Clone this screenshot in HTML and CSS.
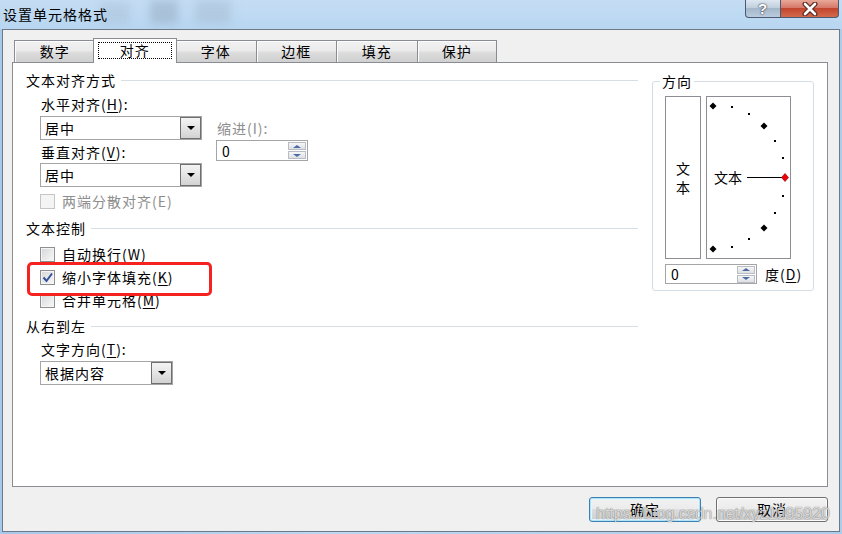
FILE: index.html
```html
<!DOCTYPE html>
<html lang="zh-CN">
<head>
	<meta charset="UTF-8">
	<title>设置单元格格式</title>
	<link rel="stylesheet" href="styles.css">
</head>
<body>
	<div class="titlebar">
		<span class="blob b1"></span>
		<span class="blob b2"></span>
		<span class="blob b3"></span>
		<span class="title">设置单元格格式</span>
		<div class="caption">
			<span class="cap help">?</span>
			<span class="cap close">
				<svg width="18" height="14" viewBox="0 0 18 14">
					<path d="M4 2 L14 12 M14 2 L4 12" stroke="#5a2a22" stroke-width="5" stroke-linecap="round"/>
					<path d="M4 2 L14 12 M14 2 L4 12" stroke="#fff" stroke-width="2.6" stroke-linecap="round"/>
				</svg>
			</span>
		</div>
	</div>

	<div class="dialog">
		<div class="tabs">
			<div class="tab">数字</div>
			<div class="tab active"><span class="focus">对齐</span></div>
			<div class="tab">字体</div>
			<div class="tab">边框</div>
			<div class="tab">填充</div>
			<div class="tab last">保护</div>
		</div>

		<div class="panel">
			<div class="left">
				<div class="head first"><span>文本对齐方式</span><i></i></div>
				<div class="align-row">
					<div class="col">
						<div class="label">水平对齐(<u>H</u>):</div>
						<div class="select wide gap4"><span>居中</span><span class="drop"></span></div>
						<div class="label gap4">垂直对齐(<u>V</u>):</div>
						<div class="select wide gap3"><span>居中</span><span class="drop"></span></div>
					</div>
					<div class="indent">
						<div class="label grey">缩进(I):</div>
						<div class="spin gap4">
							<span>0</span>
							<span class="arrows"><b class="up"></b><b class="down"></b></span>
						</div>
					</div>
				</div>
				<div class="check disabled row-dist"><span class="box"></span><span>两端分散对齐(E)</span></div>

				<div class="head h2"><span>文本控制</span><i></i></div>
				<div class="check row1"><span class="box"></span><span>自动换行(<u>W</u>)</span></div>
				<div class="check row2 marked">
					<span class="box">
						<svg width="13" height="13" viewBox="0 0 13 13">
							<path d="M2.5 6.5 L5.5 10 L11 2.5" fill="none" stroke="#34509a" stroke-width="2"/>
						</svg>
					</span>
					<span>缩小字体填充(<u>K</u>)</span>
				</div>
				<div class="check row3"><span class="box"></span><span>合并单元格(<u>M</u>)</span></div>

				<div class="head h3"><span>从右到左</span><i></i></div>
				<div class="label sub">文字方向(<u>T</u>):</div>
				<div class="select narrow gap4"><span>根据内容</span><span class="drop"></span></div>
			</div>

			<fieldset class="orient">
				<legend>方向</legend>
				<div class="orient-boxes">
					<div class="vtext"><span>文</span><span>本</span></div>
					<div class="arc">
						<svg width="83" height="161" viewBox="0 0 83 161">
							<g fill="#000">
								<polygon points="6,5.5 9.5,9 6,12.5 2.5,9"/>
								<polygon points="57,25.5 60.5,29 57,32.5 53.5,29"/>
								<polygon points="57,127.5 60.5,131 57,134.5 53.5,131"/>
								<polygon points="6,148.5 9.5,152 6,155.5 2.5,152"/>
								<rect x="24" y="9" width="2" height="2"/>
								<rect x="41" y="16" width="2" height="2"/>
								<rect x="67" y="43" width="2" height="2"/>
								<rect x="75" y="60" width="2" height="2"/>
								<rect x="75" y="98" width="2" height="2"/>
								<rect x="67" y="115" width="2" height="2"/>
								<rect x="41" y="141" width="2" height="2"/>
								<rect x="24" y="149" width="2" height="2"/>
								<rect x="40" y="80" width="36" height="1"/>
							</g>
							<polygon points="78,76.5 81.5,80.5 78,84.5 74.5,80.5" fill="#f00000" stroke="#700" stroke-width="0.6"/>
						</svg>
						<span class="arc-text">文本</span>
					</div>
				</div>
				<div class="deg-row">
					<div class="spin deg">
						<span>0</span>
						<span class="arrows"><b class="up"></b><b class="down"></b></span>
					</div>
					<span class="deg-label">度(<u>D</u>)</span>
				</div>
			</fieldset>
		</div>

		<div class="buttons">
			<div class="btn default">确定</div>
			<div class="btn">取消</div>
		</div>
	</div>

	<div class="watermark">https://blog.csdn.net/xyz1995920</div>
</body>
</html>
```

FILE: styles.css
```css
* {
	box-sizing: border-box;
}

body {
	margin: 0;
	width: 842px;
	height: 534px;
	overflow: hidden;
	position: relative;
	background: linear-gradient(90deg, #a6c9ea, #bcd8f1 40%, #aacdec);
	font-family: "Noto Sans CJK SC", sans-serif;
	font-size: 14px;
	letter-spacing: 1px;
	line-height: 16px;
	color: #000;
}

u {
	text-decoration: underline;
	text-underline-offset: 2px;
}

/* title bar */
.titlebar {
	height: 29px;
	position: relative;
	display: flex;
	align-items: flex-start;
	background: linear-gradient(180deg, #c4ddf4, #b8d6f1);
	overflow: hidden;
}

.blob {
	position: absolute;
	filter: blur(4px);
	background: rgba(130, 150, 170, 0.35);
}

.b1 { left: 100px; top: 2px; width: 30px; height: 22px; background: rgba(150, 170, 190, 0.25); }
.b2 { left: 150px; top: 0; width: 28px; height: 24px; }
.b3 { left: 195px; top: 0; width: 36px; height: 24px; background: rgba(150, 170, 190, 0.3); }

.title {
	position: relative;
	padding: 6px 0 0 3px;
	font-size: 14px;
}

.caption {
	margin-left: auto;
	margin-right: 3px;
	display: flex;
}

.cap {
	height: 18px;
	border: 1px solid #4a5a72;
	border-top: 0;
	display: flex;
	align-items: center;
	justify-content: center;
}

.help {
	width: 36px;
	border-radius: 0 0 0 4px;
	background: linear-gradient(180deg, #dde7f1, #c1cfdd 45%, #a5b8cb 50%, #b9cbdc);
	color: #fff;
	font: bold 15px "Liberation Sans", sans-serif;
	text-shadow: 0 0 2px #333, 0 0 1px #333;
}

.close {
	width: 58px;
	border-left: 0;
	border-radius: 0 0 4px 0;
	background: linear-gradient(180deg, #e9a898, #d6796a 45%, #c2452d 50%, #d36a4c);
}

/* dialog */
.dialog {
	height: 503px;
	margin: 0 2px;
	border: 1px solid #6d7888;
	background: #f0f0f0;
}

.tabs {
	margin: 8px 0 0 11px;
	height: 24px;
	display: flex;
	align-items: flex-end;
}

.tab {
	width: 80.5px;
	height: 22px;
	border: 1px solid #898c95;
	border-right: 0;
	border-bottom: 0;
	background: linear-gradient(180deg, #f2f2f2, #ebebeb 45%, #dcdcdc 55%, #d0d0d0);
	box-shadow: inset 1px 1px 0 #fcfcfc;
	text-align: center;
	line-height: 20px;
}

.tab.last {
	border-right: 1px solid #898c95;
}

.tab.active {
	width: 84.5px;
	height: 25px;
	margin: 0 -2px -1px;
	position: relative;
	z-index: 2;
	background: #fff;
	box-shadow: none;
	border-right: 1px solid #898c95;
}

.focus {
	display: block;
	height: 17px;
	margin: 3px 4px 0 4px;
	border: 1px dotted #000;
	line-height: 15px;
}

.panel {
	height: 425px;
	margin: 0 11px 0 9px;
	border: 1px solid #898c95;
	background: #fff;
	display: flex;
	align-items: flex-start;
}

.left {
	width: 625px;
	padding-left: 13px;
}

.head {
	display: flex;
	align-items: center;
	height: 16px;
}

.head i {
	flex: 1;
	height: 1px;
	margin-left: 5px;
	background: #d5dfe5;
}

.head.first { margin-top: 9px; }
.head.h2 { margin-top: 11px; }
.head.h3 { margin-top: 10px; }

.align-row {
	display: flex;
	gap: 14px;
	margin-top: 8px;
}

.col {
	width: 176px;
	padding-left: 14px;
}

.label {
	height: 16px;
	margin-left: 1px;
	white-space: nowrap;
}

.label.grey {
	color: #8d8d8d;
}

.label.sub {
	margin: 7px 0 0 15px;
}

.gap3 { margin-top: 3px; }
.gap4 { margin-top: 4px; }

.select {
	height: 24px;
	border: 1px solid #a5a5a5;
	display: flex;
	align-items: center;
	padding-left: 4px;
	background: #fff;
}

.select.wide { width: 162px; }

.select.narrow {
	width: 133px;
	margin-left: 14px;
}

.drop {
	margin-left: auto;
	width: 21px;
	height: 22px;
	border: 1px solid #6f6f6f;
	background: linear-gradient(180deg, #f4f4f4, #e4e4e4 50%, #d2d2d2);
	display: flex;
	align-items: center;
	justify-content: center;
}

.drop::after {
	content: "";
	border-left: 4px solid transparent;
	border-right: 4px solid transparent;
	border-top: 4px solid #000;
}

.indent {
	padding-top: 24px;
}

.spin {
	width: 92px;
	height: 21px;
	border: 1px solid #a5a5a5;
	display: flex;
	align-items: center;
	padding-left: 5px;
	background: #fff;
}

.arrows {
	margin-left: auto;
	margin-right: 1px;
	width: 18px;
	display: flex;
	flex-direction: column;
	gap: 1px;
}

.arrows b {
	height: 8px;
	border: 1px solid #b8bcc4;
	background: linear-gradient(180deg, #f6f6f6, #dde0e4);
	display: flex;
	align-items: center;
	justify-content: center;
}

.arrows b::after {
	content: "";
	border-left: 4px solid transparent;
	border-right: 4px solid transparent;
}

.arrows .up::after { border-bottom: 3px solid #4d6aa8; }
.arrows .down::after { border-top: 3px solid #4d6aa8; }

/* check boxes */
.check {
	display: flex;
	align-items: center;
	gap: 7px;
	height: 16px;
	margin-left: 14px;
	white-space: nowrap;
}

.box {
	width: 15px;
	height: 15px;
	border: 1px solid #8e8f8f;
	background: linear-gradient(135deg, #d4d6d9, #f9f9f9);
	box-shadow: inset 0 0 0 1px #f4f4f4;
	display: flex;
	align-items: center;
	justify-content: center;
}

.check.disabled {
	color: #8d8d8d;
}

.check.disabled .box {
	border-color: #c5c5c5;
	background: #f4f4f4;
}

.row-dist { margin-top: 6px; }
.row1 { margin-top: 10px; }
.row2 { margin-top: 7px; }
.row3 { margin-top: 7px; }

.marked {
	position: relative;
}

.marked::after {
	content: "";
	position: absolute;
	left: -13px;
	top: -7px;
	width: 179px;
	height: 28px;
	border: 3px solid #f4231f;
	border-radius: 5px;
}

/* orientation group */
.orient {
	width: 162px;
	margin: 10px 0 0 14px;
	padding: 7px 0 6px 12px;
	border: 1px solid #d3dde5;
	border-radius: 3px;
	min-inline-size: 0;
}

.orient legend {
	margin-left: -5px;
	padding: 0 2px;
	line-height: 16px;
}

.orient-boxes {
	display: flex;
	gap: 5px;
}

.vtext {
	width: 36px;
	height: 163px;
	border: 1px solid #8d8d96;
	display: flex;
	flex-direction: column;
	align-items: center;
	justify-content: center;
	line-height: 19px;
	letter-spacing: 0;
}

.arc {
	width: 85px;
	height: 163px;
	border: 1px solid #8d8d96;
	position: relative;
}

.arc svg {
	display: block;
}

.arc-text {
	position: absolute;
	left: 7px;
	top: 72px;
	letter-spacing: 0;
}

.deg-row {
	display: flex;
	align-items: center;
	margin-top: 5px;
}

.spin.deg {
	height: 20px;
}

.deg-label {
	margin-left: 8px;
}

/* buttons */
.buttons {
	display: flex;
	justify-content: flex-end;
	gap: 15px;
	margin: 10px 11px 0 0;
}

.btn {
	width: 112px;
	height: 25px;
	border: 1px solid #707070;
	border-radius: 3px;
	background: linear-gradient(180deg, #f2f2f2, #ebebeb 50%, #dddddd 50%, #cfcfcf);
	box-shadow: inset 0 0 0 1px #fbfbfb;
	text-align: center;
	line-height: 23px;
}

.btn.default {
	border-color: #3c7fb1;
	box-shadow: inset 0 0 0 1px #aee3f8, inset 0 0 0 2px #e4f4fc;
}

.watermark {
	position: absolute;
	left: 596px;
	top: 505px;
	font: 16px "Liberation Sans", sans-serif;
	letter-spacing: 0;
	color: rgba(255, 255, 255, 0.75);
	text-shadow: 0 0 1px rgba(0, 0, 0, 0.45), 0 0 1px rgba(0, 0, 0, 0.3);
	white-space: nowrap;
}
```
